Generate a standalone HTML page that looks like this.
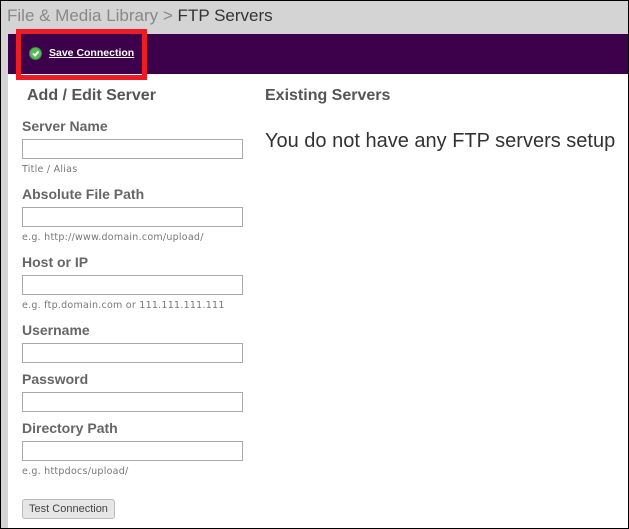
<!DOCTYPE html>
<html><head><style>
*{box-sizing:border-box;margin:0;padding:0}
body{width:629px;height:529px;overflow:hidden;font-family:"Liberation Sans",Arial,sans-serif;background:#fff}
.frame{position:absolute;left:0;top:0;width:629px;height:529px;border:1px solid #000;background:#d4d4d4}
.crumb{position:absolute;left:7px;top:6px;font-size:17px;color:#888}
.crumb b{font-weight:normal;color:#333}
.red{position:absolute;left:16px;top:29px;width:131px;height:51px;border:5px solid #ed1c24}
.save{position:absolute;left:49px;top:47px;color:#fff;font-size:10.5px;font-weight:bold;text-decoration:underline}
.chk{position:absolute;left:29px;top:47px;width:13px;height:13px;border-radius:50%;background:#5cb85c;border:1px solid #3a8a3a}
h2{position:absolute;font-size:16px;font-weight:bold;color:#555}
.lab{position:absolute;left:22px;font-size:14px;font-weight:bold;color:#666}
.inp{position:absolute;left:22px;width:221px;height:20px;border:1px solid #aaa;background:#fff}
.hint{position:absolute;left:22px;font-family:"DejaVu Sans",sans-serif;font-size:9.5px;letter-spacing:0.25px;color:#777}
.btn{position:absolute;left:22px;top:499px;width:93px;height:20px;border:1px solid #bbb;border-radius:3px;background:#e6e6e6;font-size:11px;color:#444;text-align:center;line-height:18px}
</style></head><body>
<div class="frame"></div>
<div class="crumb">File &amp; Media Library &gt; <b>FTP Servers</b></div>
<div style="position:absolute;left:8px;top:34px;width:620px;height:494px;background:#fff"></div>
<div style="position:absolute;left:8px;top:34px;width:620px;height:40px;background:#3d004a"></div>
<div class="red"></div>
<div class="chk"><svg width="11" height="11" viewBox="0 0 11 11" style="position:absolute;left:0;top:0"><path d="M3 5.5l2 2 3.5-4" stroke="#fff" stroke-width="1.8" fill="none"/></svg></div>
<div class="save">Save Connection</div>
<h2 style="left:27px;top:87px">Add / Edit Server</h2>
<h2 style="left:265px;top:87px">Existing Servers</h2>
<div style="position:absolute;left:265px;top:130px;font-size:20px;color:#333">You do not have any FTP servers setup</div>
<div class="lab" style="top:118px">Server Name</div>
<div class="inp" style="top:139px"></div>
<div class="hint" style="top:164px">Title / Alias</div>
<div class="lab" style="top:186px">Absolute File Path</div>
<div class="inp" style="top:207px"></div>
<div class="hint" style="top:232px">e.g. http://www.domain.com/upload/</div>
<div class="lab" style="top:254px">Host or IP</div>
<div class="inp" style="top:275px"></div>
<div class="hint" style="top:300px">e.g. ftp.domain.com or 111.111.111.111</div>
<div class="lab" style="top:322px">Username</div>
<div class="inp" style="top:343px"></div>
<div class="lab" style="top:371px">Password</div>
<div class="inp" style="top:392px"></div>
<div class="lab" style="top:420px">Directory Path</div>
<div class="inp" style="top:441px"></div>
<div class="hint" style="top:466px">e.g. httpdocs/upload/</div>
<div class="btn">Test Connection</div>
</body></html>
